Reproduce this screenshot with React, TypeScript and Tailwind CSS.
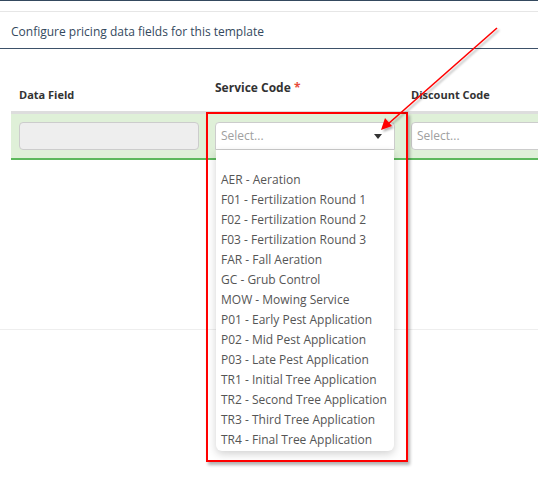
const SERVICE_CODES = [
  '',
  'AER - Aeration',
  'F01 - Fertilization Round 1',
  'F02 - Fertilization Round 2',
  'F03 - Fertilization Round 3',
  'FAR - Fall Aeration',
  'GC - Grub Control',
  'MOW - Mowing Service',
  'P01 - Early Pest Application',
  'P02 - Mid Pest Application',
  'P03 - Late Pest Application',
  'TR1 - Initial Tree Application',
  'TR2 - Second Tree Application',
  'TR3 - Third Tree Application',
  'TR4 - Final Tree Application',
];

function Caret() {
  return (
    <svg width="8" height="5" viewBox="0 0 8 5" className="shrink-0">
      <path d="M0 0h8L4 5z" fill="#333" />
    </svg>
  );
}

function SelectBox({ open }: { open?: boolean }) {
  return (
    <div className="relative">
      <div
        className={`flex h-[28px] w-[180px] items-center justify-between border border-[#cccccc] bg-white pl-[5px] pr-[12px] text-[12px] text-[#a0a0a0] ${
          open ? 'rounded-t-[4px]' : 'rounded-[4px]'
        }`}
      >
        <span>Select...</span>
        {open && <Caret />}
      </div>
      {open && (
        <ul className="absolute left-[1px] top-[28px] z-10 w-[178px] rounded-b-[6px] bg-white pb-[1px] shadow-[0_3px_8px_rgba(0,0,0,0.18)]">
          {SERVICE_CODES.map((code, i) => (
            <li
              key={i}
              className="h-[20px] whitespace-nowrap pl-[5px] text-[12px] leading-[20px] text-[#555555]"
            >
              {code}
            </li>
          ))}
        </ul>
      )}
    </div>
  );
}

export default function App() {
  return (
    <div
      className="relative h-[491px] w-[538px] overflow-hidden bg-white"
      style={{ fontFamily: '"Open Sans", "Noto Sans", sans-serif' }}
    >
      <div className="h-[1px] bg-[#34495e]" />
      <div className="mt-[10px] border-t border-[#e6e6e6]">
        <p className="border-b border-[#3d5169] px-[11px] pb-[9px] pt-[12px] text-[12px] leading-[15px] text-[#34495e]">
          Configure pricing data fields for this template
        </p>
      </div>

      <div className="ml-[11px] mt-[29px] w-[600px]">
        <div className="flex h-[33px] items-end pb-[9px] text-[#333333]">
          <div className="w-[196px] pl-[8px] text-[11px] font-bold leading-[14px]">Data Field</div>
          <div className="w-[196px] self-start pl-[8px] pt-[2px] text-[12px] font-bold leading-[16px]">
            Service Code <span className="text-[#e74c3c]">*</span>
          </div>
          <div className="w-[196px] pl-[8px] text-[11px] font-bold leading-[14px]">Discount Code</div>
        </div>
        <div className="flex border-t-[3px] border-b-[2px] border-t-[#dddddd] border-b-[#5cb85c] bg-[#dff0d8] py-[8px]">
          <div className="w-[196px] px-[8px]">
            <div className="h-[28px] w-[180px] rounded-[4px] border border-[#cccccc] bg-[#eeeeee]" />
          </div>
          <div className="w-[196px] px-[8px]">
            <SelectBox open />
          </div>
          <div className="w-[196px] px-[8px]">
            <SelectBox />
          </div>
        </div>
      </div>

      <div className="mt-[169px] border-t border-[#eeeeee]" />

      {/* annotation overlay */}
      <div className="pointer-events-none absolute left-[206px] top-[112px] z-20 h-[350px] w-[202px] border-2 border-[#ff0000] shadow-[2px_3px_3px_rgba(0,0,0,0.3)]" />
      <svg
        className="pointer-events-none absolute left-0 top-0 z-20"
        width="538"
        height="491"
        viewBox="0 0 538 491"
      >
        <defs>
          <filter id="sh" x="-20%" y="-20%" width="140%" height="140%">
            <feDropShadow dx="2" dy="2" stdDeviation="1.2" floodColor="#000" floodOpacity="0.3" />
          </filter>
        </defs>
        <g filter="url(#sh)">
          <line x1="497" y1="28" x2="388" y2="124" stroke="#ff0000" strokeWidth="1.6" />
          <path d="M381 130 L385 118 L392 126 Z" fill="#ff0000" />
        </g>
      </svg>
    </div>
  );
}
